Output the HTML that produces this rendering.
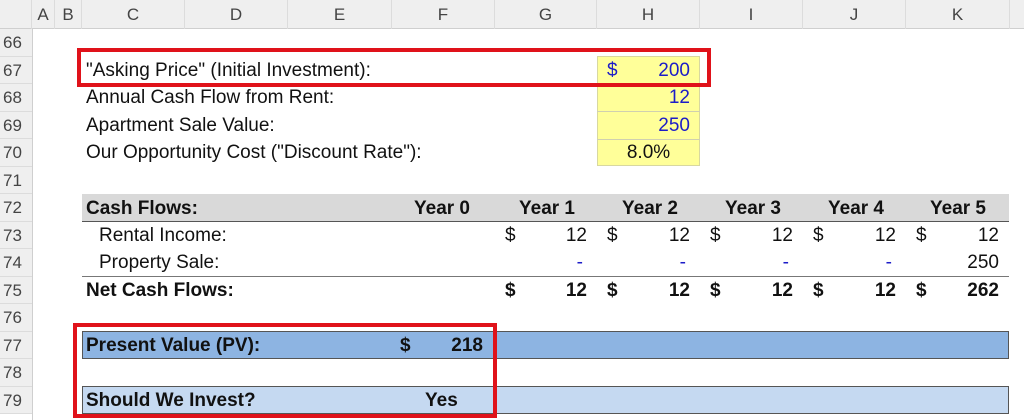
<!DOCTYPE html>
<html><head><meta charset="utf-8"><style>
*{margin:0;padding:0;box-sizing:border-box}
body{width:1024px;height:420px;overflow:hidden;background:#fff;font-family:"Liberation Sans",Carlito,sans-serif;position:relative;color:#111}
.a{position:absolute;white-space:nowrap;font-size:19px;line-height:28px}
.hd{position:absolute;top:0;left:0;width:1024px;height:29px;background:#efefef;border-bottom:1px solid #cfcfcf}
.hc{position:absolute;top:0;height:29px;line-height:30px;text-align:center;font-size:17px;color:#444;border-right:1px solid #dcdcdc}
.rn{position:absolute;left:0;width:32px;height:27.5px;line-height:28px;font-size:17px;color:#444;background:#efefef;border-bottom:1px solid #dcdcdc;padding-left:3px}
.b{font-weight:bold}
.blue{color:#1c1cc8}
.r{text-align:right}
</style></head><body>
<div class="hd"></div>
<div class="hc" style="left:0;width:32px"></div>
<div class="hc" style="left:32px;width:23px">A</div>
<div class="hc" style="left:55px;width:27px">B</div>
<div class="hc" style="left:82px;width:103px">C</div>
<div class="hc" style="left:185px;width:103px">D</div>
<div class="hc" style="left:288px;width:104px">E</div>
<div class="hc" style="left:392px;width:103px">F</div>
<div class="hc" style="left:495px;width:102px">G</div>
<div class="hc" style="left:597px;width:103px">H</div>
<div class="hc" style="left:700px;width:103px">I</div>
<div class="hc" style="left:803px;width:103px">J</div>
<div class="hc" style="left:906px;width:104px">K</div>
<div style="position:absolute;left:32px;top:29px;width:1px;height:391px;background:#cfcfcf"></div>

<div class="rn" style="top:29px">66</div>
<div class="rn" style="top:56.5px">67</div>
<div class="rn" style="top:84px">68</div>
<div class="rn" style="top:111.5px">69</div>
<div class="rn" style="top:139px">70</div>
<div class="rn" style="top:166.5px">71</div>
<div class="rn" style="top:194px">72</div>
<div class="rn" style="top:221.5px">73</div>
<div class="rn" style="top:249px">74</div>
<div class="rn" style="top:276.5px">75</div>
<div class="rn" style="top:304px">76</div>
<div class="rn" style="top:331.5px">77</div>
<div class="rn" style="top:359px">78</div>
<div class="rn" style="top:386.5px">79</div>

<div style="position:absolute;left:597px;top:56px;width:103px;height:110px;background:#ffff99;border:1px solid #d8d8a0"></div>
<div style="position:absolute;left:597px;top:84px;width:103px;height:1px;background:#d0d0b0"></div>
<div style="position:absolute;left:597px;top:111px;width:103px;height:1px;background:#d0d0b0"></div>
<div style="position:absolute;left:597px;top:139px;width:103px;height:1px;background:#d0d0b0"></div>

<div class="a" style="left:86px;top:57px">"Asking Price" (Initial Investment):</div>
<div class="a" style="left:86px;top:84px">Annual Cash Flow from Rent:</div>
<div class="a" style="left:86px;top:112px">Apartment Sale Value:</div>
<div class="a" style="left:86px;top:139px">Our Opportunity Cost ("Discount Rate"):</div>
<div class="a blue" style="left:607px;top:57px">$</div>
<div class="a blue r" style="left:600px;width:90px;top:57px">200</div>
<div class="a blue r" style="left:600px;width:90px;top:84px">12</div>
<div class="a blue r" style="left:600px;width:90px;top:112px">250</div>
<div class="a" style="left:597px;width:103px;top:139px;text-align:center">8.0%</div>

<div style="position:absolute;left:77px;top:48px;width:634px;height:39px;border:4px solid #e0121a"></div>

<div style="position:absolute;left:82px;top:194px;width:927px;height:28px;background:#d9d9d9;border-bottom:1px solid #555"></div>
<div class="a b" style="left:86px;top:195px">Cash Flows:</div>
<div class="a b r" style="left:392px;width:78px;top:195px">Year 0</div>
<div class="a b r" style="left:495px;width:80px;top:195px">Year 1</div>
<div class="a b r" style="left:597px;width:81px;top:195px">Year 2</div>
<div class="a b r" style="left:700px;width:81px;top:195px">Year 3</div>
<div class="a b r" style="left:803px;width:81px;top:195px">Year 4</div>
<div class="a b r" style="left:906px;width:80px;top:195px">Year 5</div>

<div class="a" style="left:99px;top:222px">Rental Income:</div>
<div class="a" style="left:99px;top:249px">Property Sale:</div>
<div style="position:absolute;left:82px;top:276px;width:927px;height:1px;background:#777"></div>
<div class="a b" style="left:86px;top:277px">Net Cash Flows:</div>

<div class="a" style="left:505px;top:222px">$</div><div class="a r" style="left:495px;width:92px;top:222px">12</div>
<div class="a" style="left:607px;top:222px">$</div><div class="a r" style="left:597px;width:93px;top:222px">12</div>
<div class="a" style="left:710px;top:222px">$</div><div class="a r" style="left:700px;width:93px;top:222px">12</div>
<div class="a" style="left:813px;top:222px">$</div><div class="a r" style="left:803px;width:93px;top:222px">12</div>
<div class="a" style="left:916px;top:222px">$</div><div class="a r" style="left:906px;width:93px;top:222px">12</div>

<div class="a blue r" style="left:495px;width:88px;top:249px">-</div>
<div class="a blue r" style="left:597px;width:89px;top:249px">-</div>
<div class="a blue r" style="left:700px;width:89px;top:249px">-</div>
<div class="a blue r" style="left:803px;width:89px;top:249px">-</div>
<div class="a r" style="left:906px;width:93px;top:249px">250</div>

<div class="a b" style="left:505px;top:277px">$</div><div class="a b r" style="left:495px;width:92px;top:277px">12</div>
<div class="a b" style="left:607px;top:277px">$</div><div class="a b r" style="left:597px;width:93px;top:277px">12</div>
<div class="a b" style="left:710px;top:277px">$</div><div class="a b r" style="left:700px;width:93px;top:277px">12</div>
<div class="a b" style="left:813px;top:277px">$</div><div class="a b r" style="left:803px;width:93px;top:277px">12</div>
<div class="a b" style="left:916px;top:277px">$</div><div class="a b r" style="left:906px;width:93px;top:277px">262</div>

<div style="position:absolute;left:82px;top:331px;width:927px;height:28px;background:#8db4e2;border:1px solid #555"></div>
<div class="a b" style="left:86px;top:332px">Present Value (PV):</div>
<div class="a b" style="left:400px;top:332px">$</div>
<div class="a b r" style="left:392px;width:91px;top:332px">218</div>
<div style="position:absolute;left:82px;top:386px;width:927px;height:28px;background:#c5d9f1;border:1px solid #555"></div>
<div class="a b" style="left:86px;top:387px">Should We Invest?</div>
<div class="a b" style="left:425px;top:387px">Yes</div>

<div style="position:absolute;left:73px;top:323px;width:424px;height:95px;border:4px solid #e0121a"></div>
</body></html>
